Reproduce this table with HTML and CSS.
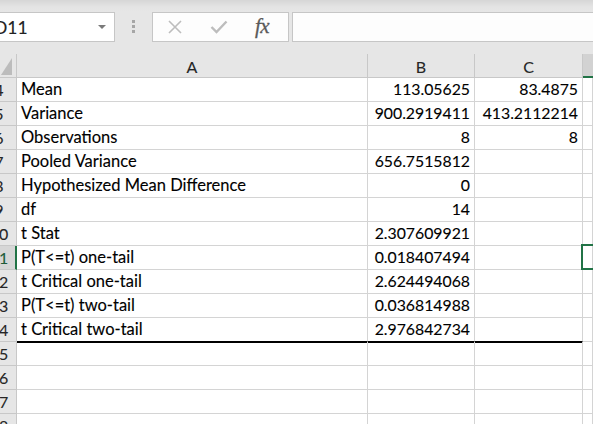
FILE: index.html
```html
<!DOCTYPE html>
<html>
<head>
<meta charset="utf-8">
<link rel="stylesheet" href="styles.css">
</head>
<body>
<div class="toolbar">
  <div class="namebox"><span class="ref">D11</span><span class="drop"></span></div>
  <div class="grip"><i></i><i></i><i></i></div>
  <div class="btns">
    <svg class="ico-x" width="16" height="14" viewBox="0 0 16 14"><path d="M2 1 L14 13 M14 1 L2 13" stroke="#bdbdbd" stroke-width="1.6" fill="none"/></svg>
    <svg class="ico-ok" width="18" height="14" viewBox="0 0 18 14"><path d="M1.5 7 L6.5 12 L16.5 1.5" stroke="#bdbdbd" stroke-width="2.4" fill="none"/></svg>
    <span class="fx">fx</span>
  </div>
  <div class="formula"></div>
</div>
<div class="sheet">
  <div class="corner"><svg width="16" height="23" viewBox="0 0 16 23"><path d="M1 21 L12 21 L12 4 Z" fill="#bcbcbc"/></svg></div>
  <div class="ch">A</div><div class="ch">B</div><div class="ch">C</div><div class="ch chsel"></div>

  <div class="rh"><span>4</span></div><div class="c t">Mean</div><div class="c n">113.05625</div><div class="c n">83.4875</div><div class="c"></div>
  <div class="rh"><span>5</span></div><div class="c t">Variance</div><div class="c n">900.2919411</div><div class="c n">413.2112214</div><div class="c"></div>
  <div class="rh"><span>6</span></div><div class="c t">Observations</div><div class="c n">8</div><div class="c n">8</div><div class="c"></div>
  <div class="rh"><span>7</span></div><div class="c t">Pooled Variance</div><div class="c n">656.7515812</div><div class="c n"></div><div class="c"></div>
  <div class="rh"><span>8</span></div><div class="c t">Hypothesized Mean Difference</div><div class="c n">0</div><div class="c n"></div><div class="c"></div>
  <div class="rh"><span>9</span></div><div class="c t">df</div><div class="c n">14</div><div class="c n"></div><div class="c"></div>
  <div class="rh"><span>10</span></div><div class="c t">t Stat</div><div class="c n">2.307609921</div><div class="c n"></div><div class="c"></div>
  <div class="rh rhsel"><span>11</span></div><div class="c t">P(T&lt;=t) one-tail</div><div class="c n">0.018407494</div><div class="c n"></div><div class="c sel"></div>
  <div class="rh"><span>12</span></div><div class="c t">t Critical one-tail</div><div class="c n">2.624494068</div><div class="c n"></div><div class="c"></div>
  <div class="rh"><span>13</span></div><div class="c t">P(T&lt;=t) two-tail</div><div class="c n">0.036814988</div><div class="c n"></div><div class="c"></div>
  <div class="rh"><span>14</span></div><div class="c t thick">t Critical two-tail</div><div class="c n thick">2.976842734</div><div class="c n thick"></div><div class="c"></div>
  <div class="rh"><span>15</span></div><div class="c"></div><div class="c"></div><div class="c"></div><div class="c"></div>
  <div class="rh"><span>16</span></div><div class="c"></div><div class="c"></div><div class="c"></div><div class="c"></div>
  <div class="rh"><span>17</span></div><div class="c"></div><div class="c"></div><div class="c"></div><div class="c"></div>
  <div class="rh"><span>18</span></div><div class="c"></div><div class="c"></div><div class="c"></div><div class="c"></div>
</div>
</body>
</html>
```
FILE: styles.css
```css
html, body {
  margin: 0;
  padding: 0;
  background: #fff;
  overflow: hidden;
  width: 593px;
  height: 424px;
}
body {
  font-family: Lato, "Liberation Sans", sans-serif;
  color: #000;
  -webkit-text-stroke: 0.12px currentColor;
}
.toolbar {
  height: 54px;
  background: linear-gradient(#d6d6d6 0px, #e4e4e4 7px, #e6e6e6 12px);
  display: flex;
  align-items: flex-start;
  padding-top: 12px;
  box-sizing: border-box;
}
.namebox {
  width: 116px;
  height: 30px;
  margin-left: -1px;
  box-sizing: border-box;
  background: #fff;
  border: 1px solid #c6c6c6;
  display: flex;
  align-items: center;
  overflow: hidden;
  position: relative;
}
.ref {
  font-size: 17.5px;
  margin-left: -6px;
  color: #222;
  flex: 1;
}
.drop {
  width: 0;
  height: 0;
  border-left: 4px solid transparent;
  border-right: 4px solid transparent;
  border-top: 4px solid #7a7a7a;
  margin-right: 8px;
}
.grip {
  width: 37px;
  display: flex;
  flex-direction: column;
  align-items: center;
  gap: 2px;
  padding-top: 8px;
}
.grip i {
  display: block;
  width: 3px;
  height: 3px;
  background: #a6a6a6;
}
.btns {
  width: 137px;
  height: 30px;
  box-sizing: border-box;
  background: #fdfdfd;
  border: 1px solid #c6c6c6;
  display: flex;
  align-items: center;
}
.ico-x { margin-left: 14px; }
.ico-ok { margin-left: 27px; }
.fx {
  font-family: "Liberation Serif", "DejaVu Serif", serif;
  font-style: italic;
  font-size: 21px;
  color: #5a5a5a;
  margin-left: 27px;
  margin-top: -2px;
  letter-spacing: -0.5px;
  -webkit-text-stroke: 0.3px currentColor;
}
.formula {
  flex: 1;
  height: 30px;
  margin-left: 3px;
  margin-right: -2px;
  box-sizing: border-box;
  background: #fdfdfd;
  border: 1px solid #c6c6c6;
}
.sheet {
  display: grid;
  grid-template-columns: 17px 351px 107px 108px 1fr;
  grid-auto-rows: 24px;
}
.corner {
  background: #e6e6e6;
  border-right: 1px solid #c8c8c8;
  border-bottom: 1px solid #c8c8c8;
  box-sizing: border-box;
  overflow: hidden;
}
.corner svg { display: block; }
.ch {
  background: #e6e6e6;
  border-right: 1px solid #c8c8c8;
  border-bottom: 1px solid #c8c8c8;
  box-sizing: border-box;
  display: flex;
  align-items: center;
  justify-content: center;
  font-size: 16px;
  color: #262626;
  padding-top: 1px;
}
.chsel {
  background: #d2d2d2;
  border-bottom: 2px solid #217346;
  border-right: none;
}
.rh {
  background: #e6e6e6;
  border-right: 1px solid #c8c8c8;
  border-bottom: 1px solid #c8c8c8;
  box-sizing: border-box;
  overflow: hidden;
  display: flex;
  align-items: flex-end;
  padding-bottom: 3px;
  font-size: 16px;
  color: #262626;
}
.rh span {
  flex: none;
  width: 34px;
  margin-left: -18px;
  text-align: center;
  line-height: 1;
}
.rhsel {
  background: #d6d6d6;
  border-right: 2px solid #217346;
  color: #1e5b38;
}
.c {
  border-right: 1px solid #d4d4d4;
  border-bottom: 1px solid #d4d4d4;
  box-sizing: border-box;
  display: flex;
  align-items: flex-end;
  padding: 0 4px 4px 4px;
  line-height: 1;
  white-space: nowrap;
  position: relative;
}
.t {
  justify-content: flex-start;
  padding-left: 4px;
  font-size: 16.5px;
}
.n {
  justify-content: flex-end;
  font-size: 15.8px;
}
.thick {
  border-bottom: 1px solid #000;
  box-shadow: 0 1px 0 #000;
}
.sel::after {
  content: "";
  position: absolute;
  top: -2px;
  left: -2px;
  right: -4px;
  bottom: -1px;
  border: 2px solid #217346;
}
```
